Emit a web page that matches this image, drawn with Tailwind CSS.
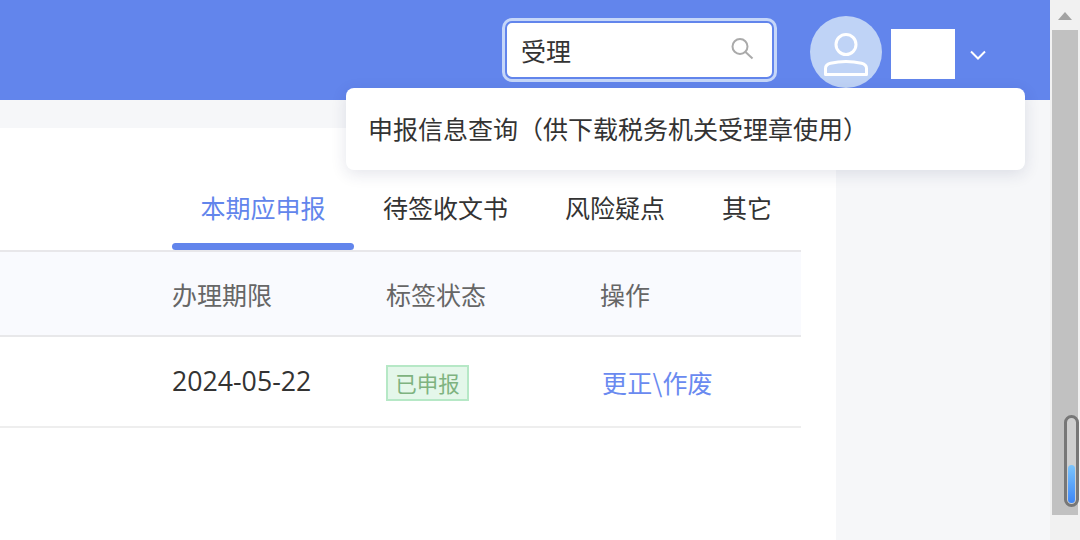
<!DOCTYPE html>
<html lang="zh-CN">
  <head>
    <meta charset="UTF-8" />
    <title>申报信息查询</title>
    <script src="https://cdn.jsdelivr.net/npm/@tailwindcss/browser@4"></script>
  </head>
  <body class="overflow-hidden bg-[#f6f7f9] text-[#333] font-['Noto_Sans_CJK_SC','Noto_Sans',sans-serif]">
    <div class="relative flex h-[540px] w-[1080px]">

      <!-- Page -->
      <div class="flex w-[1050px] flex-col">
        <header class="flex h-[100px] shrink-0 items-center justify-end bg-[#6285ec] pr-[64px]">
          <div class="flex h-[58px] w-[269px] items-center justify-between rounded-[7px] border-2 border-[#6285ec] bg-white pr-[17px] pl-[14px] ring-[3px] ring-[#c6d7f9]">
            <span class="text-[25px] leading-[34px]">受理</span>
            <svg class="mb-[2px] h-[26px] w-[26px]" viewBox="0 0 26 26" fill="none" stroke="#aaa" stroke-width="2">
              <circle cx="11" cy="10.5" r="7.5" />
              <path d="M16.5 16l7 6.5" />
            </svg>
          </div>
          <div class="ml-[36px] mt-[4px] flex h-[72px] w-[72px] items-center justify-center rounded-full bg-[#bfd3f6]">
            <svg class="h-[50px] w-[50px]" viewBox="0 0 50 50" fill="none" stroke="#fff" stroke-width="3">
              <circle cx="25" cy="17.500" r="10" />
              <path d="M4.500 47.500v-6c0-3 2-4.500 5-5.200 5-1.200 10-1.800 15.500-1.800s10.500.6 15.500 1.800c3 .7 5 2.200 5 5.200v6z" stroke-linejoin="round" />
            </svg>
          </div>
          <div class="ml-[9px] mt-[7px] h-[50px] w-[64px] bg-white"></div>
          <svg class="ml-[15px] mt-[10px] h-[10px] w-[16px]" viewBox="0 0 16 10" fill="none" stroke="#fff" stroke-width="2">
            <path d="M1 1.500l7 7 7-7" />
          </svg>
        </header>

        <main class="flex flex-1 flex-col pt-[28px]">
          <div class="w-[836px] flex-1 bg-white pt-[62px]">
            <!-- Tabs -->
            <div class="flex w-[801px] border-b-2 border-[#e8e7ea] pl-[172px] text-[25px] leading-[34px]">
              <div class="flex w-[182px] flex-col items-center text-[#6285ec]">
                <span>本期应申报</span>
                <div class="mt-[19px] h-[7px] w-full rounded-full bg-[#6285ec]"></div>
              </div>
              <span class="ml-[29px]">待签收文书</span>
              <span class="ml-[57px]">风险疑点</span>
              <span class="ml-[57px]">其它</span>
            </div>

            <!-- Table -->
            <div class="grid w-[801px] grid-cols-[172px_214px_214px_201px] text-[25px]">
              <div class="col-span-4 grid h-[85px] grid-cols-subgrid items-center border-b-2 border-[#e8e8ea] bg-[#f9fafe] pt-[2px] text-[#666]">
                <span></span>
                <span>办理期限</span>
                <span>标签状态</span>
                <span>操作</span>
              </div>
              <div class="col-span-4 grid h-[91px] grid-cols-subgrid items-center border-b-2 border-[#eeeeee]">
                <span></span>
                <span class="mb-[1px] font-['Open_Sans','Noto_Sans',sans-serif] text-[26.700px]">2024-05-22</span>
                <span>
                  <span class="inline-block h-[36px] w-[83px] border-2 border-[#b6e8c6] bg-[#e4f7ea] text-center text-[21.500px] leading-[32px] text-[#7eb380]">已申报</span>
                </span>
                <a class="ml-[2px] mt-[2px] text-[#6a8af0] tracking-[0.2px]">更正\作废</a>
              </div>
            </div>
          </div>
        </main>
      </div>

      <!-- Scrollbar -->
      <div class="flex w-[30px] flex-col items-center bg-[#f1f1f1]">
        <div class="flex h-[30px] w-full items-center justify-center pt-[2px]">
          <div class="h-0 w-0 border-x-[7px] border-b-[8px] border-x-transparent border-b-[#a3a3a3]"></div>
        </div>
        <div class="h-[485px] w-[26px] bg-[#c1c1c1]"></div>
      </div>

      <!-- Scroll indicator floating over the bar -->
      <div class="absolute top-[415px] left-[1064px] flex h-[92px] w-[15px] flex-col justify-end rounded-full border-[3px] border-[#777] bg-[#cfcfcf] p-[1px]">
        <div class="h-[38px] rounded-full bg-gradient-to-b from-[#7cc4fb] to-[#3f86f5]"></div>
      </div>

      <!-- Search suggestions -->
      <div class="absolute top-[87.500px] left-[346px] flex h-[82px] w-[679px] items-center rounded-[8px] bg-white pl-[22px] text-[25px] shadow-[0_4px_16px_rgba(30,40,90,0.12)]">
        申报信息查询（供下载税务机关受理章使用）
      </div>
    </div>
  </body>
</html>
